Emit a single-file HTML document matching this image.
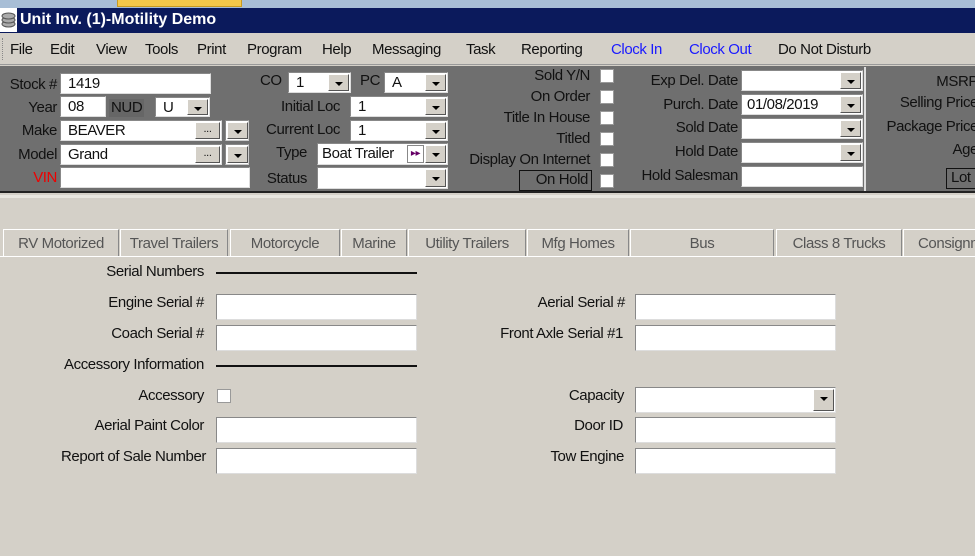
<!DOCTYPE html>
<html><head><meta charset="utf-8"><style>
*{margin:0;padding:0;box-sizing:border-box}
body{width:975px;height:556px;overflow:hidden;background:#d4d0c8;position:relative;font-family:"Liberation Sans",sans-serif;font-size:15px;color:#111;letter-spacing:-0.4px}
div,span{position:absolute}
.l{white-space:nowrap;text-align:right;line-height:18px}
.i{background:#fff;border:1px solid #888;border-right-color:#ddd;border-bottom-color:#ddd;padding-left:7px;line-height:19px;white-space:nowrap;overflow:hidden}
.b{background:#d4d0c8;border:1px solid #fff;border-right-color:#555;border-bottom-color:#555;top:1px;bottom:1px;width:21px}
.b:after{content:"";position:absolute;left:6px;top:7px;border-left:4px solid transparent;border-right:4px solid transparent;border-top:4px solid #000}
.d{background:#d4d0c8;border:1px solid #fff;border-right-color:#555;border-bottom-color:#555;top:1px;bottom:1px;width:25px;font-size:11px;text-align:center;line-height:12px}
.c{width:14px;height:14px;background:#fff;border:1px solid #999}
.tab{top:229px;height:28px;border:1px solid #fff;border-right-color:#888;border-bottom:none;text-align:center;color:#555;line-height:27px;white-space:nowrap;overflow:hidden}
.w{background:#fff;border:1px solid #888;border-right-color:#ccc;border-bottom-color:#ccc}
.m{top:41px;line-height:18px;white-space:nowrap}
</style></head><body>
<div style="left:0;top:0;width:975px;height:8px;background:#a8bed6"></div>
<div style="left:117px;top:0;width:125px;height:7px;background:#f4c84a;border:1px solid #c89a20;border-top:none"></div>
<div style="left:0;top:8px;width:975px;height:25px;background:#0b1a5c"></div>
<div style="left:0;top:8px;width:17px;height:24px;background:#fff"></div>
<svg style="position:absolute;left:1px;top:12px" width="15" height="16"><g fill="#aaa" stroke="#555"><ellipse cx="7.5" cy="12" rx="6.5" ry="3"/><ellipse cx="7.5" cy="8" rx="6.5" ry="3"/><ellipse cx="7.5" cy="4" rx="6.5" ry="3"/></g></svg>
<div style="left:20px;top:10px;color:#fff;font-weight:bold;font-size:16px;line-height:20px;letter-spacing:0">Unit Inv. (1)-Motility Demo</div>
<div style="left:0;top:33px;width:975px;height:32px;background:#d4d0c8;border-bottom:1px solid #999"></div>
<div style="left:2px;top:38px;width:2px;height:22px;border-left:1px dotted #888"></div>
<span class="m" style="left:10px">File</span><span class="m" style="left:50px">Edit</span><span class="m" style="left:96px">View</span><span class="m" style="left:145px">Tools</span><span class="m" style="left:197px">Print</span><span class="m" style="left:247px">Program</span><span class="m" style="left:322px">Help</span><span class="m" style="left:372px">Messaging</span><span class="m" style="left:466px">Task</span><span class="m" style="left:521px">Reporting</span><span class="m" style="left:611px;color:#1a1aff">Clock In</span><span class="m" style="left:689px;color:#1a1aff">Clock Out</span><span class="m" style="left:778px">Do Not Disturb</span>

<div style="left:0;top:66px;width:975px;height:127px;background:#6f6f6f;border-bottom:2px solid #222"></div>
<div style="left:0;top:195px;width:975px;height:3px;background:#e8e6e0"></div>

<div class="l" style="right:918px;top:76px">Stock #</div><div class="i" style="left:60px;top:73px;width:151px;height:21px">1419</div>
<div class="l" style="right:918px;top:99px">Year</div><div class="i" style="left:60px;top:96px;width:46px;height:21px">08</div>
<div class="l" style="left:109px;top:99px;background:#666;padding:0 2px">NUD</div>
<div class="i" style="left:155px;top:97px;width:55px;height:20px">U<div class="b" style="right:1px"></div></div>
<div class="l" style="right:918px;top:122px">Make</div><div class="i" style="left:60px;top:120px;width:162px;height:21px">BEAVER<div class="d" style="right:1px">...</div></div>
<div class="w" style="left:225px;top:120px;width:24px;height:21px"><div class="b" style="right:0"></div></div>
<div class="l" style="right:918px;top:146px">Model</div><div class="i" style="left:60px;top:144px;width:162px;height:21px">Grand<div class="d" style="right:1px">...</div></div>
<div class="w" style="left:225px;top:144px;width:24px;height:21px"><div class="b" style="right:0"></div></div>
<div class="l" style="right:918px;top:169px;color:#e00">VIN</div><div class="i" style="left:60px;top:167px;width:190px;height:21px"></div>

<div class="l" style="left:260px;top:72px">CO</div><div class="i" style="left:288px;top:72px;width:63px;height:21px">1<div class="b" style="right:1px"></div></div>
<div class="l" style="left:360px;top:72px">PC</div><div class="i" style="left:384px;top:72px;width:64px;height:21px">A<div class="b" style="right:1px"></div></div>
<div class="l" style="right:635px;top:98px">Initial Loc</div><div class="i" style="left:350px;top:96px;width:98px;height:21px">1<div class="b" style="right:1px"></div></div>
<div class="l" style="right:635px;top:121px">Current Loc</div><div class="i" style="left:350px;top:120px;width:98px;height:21px">1<div class="b" style="right:1px"></div></div>
<div class="l" style="right:668px;top:144px">Type</div><div class="i" style="left:317px;top:143px;width:131px;height:22px;padding-left:4px">Boat Trailer<div style="right:23px;top:1px;width:17px;height:18px;border:1px solid #888;background:#fff;color:#606;font-size:10px;line-height:16px;text-align:center">▸▸</div><div class="b" style="right:1px"></div></div>
<div class="l" style="right:668px;top:170px">Status</div><div class="i" style="left:317px;top:167px;width:131px;height:22px"><div class="b" style="right:1px"></div></div>

<div class="l" style="right:385px;top:67px">Sold Y/N</div><div class="c" style="left:600px;top:69px"></div>
<div class="l" style="right:385px;top:88px">On Order</div><div class="c" style="left:600px;top:90px"></div>
<div class="l" style="right:385px;top:109px">Title In House</div><div class="c" style="left:600px;top:111px"></div>
<div class="l" style="right:385px;top:130px">Titled</div><div class="c" style="left:600px;top:132px"></div>
<div class="l" style="right:385px;top:151px">Display On Internet</div><div class="c" style="left:600px;top:153px"></div>
<div class="l" style="left:519px;top:170px;width:73px;height:21px;border:1px solid #111;padding-right:3px">On Hold</div><div class="c" style="left:600px;top:174px"></div>

<div class="l" style="right:237px;top:72px">Exp Del. Date</div><div class="i" style="left:741px;top:70px;width:122px;height:21px"><div class="b" style="right:1px"></div></div>
<div class="l" style="right:237px;top:96px">Purch. Date</div><div class="i" style="left:741px;top:94px;width:122px;height:21px;padding-left:5px">01/08/2019<div class="b" style="right:1px"></div></div>
<div class="l" style="right:237px;top:119px">Sold Date</div><div class="i" style="left:741px;top:118px;width:122px;height:21px"><div class="b" style="right:1px"></div></div>
<div class="l" style="right:237px;top:143px">Hold Date</div><div class="i" style="left:741px;top:142px;width:122px;height:21px"><div class="b" style="right:1px"></div></div>
<div class="l" style="right:237px;top:167px">Hold Salesman</div><div class="i" style="left:741px;top:166px;width:122px;height:21px"></div>
<div style="left:864px;top:67px;width:2px;height:124px;background:#ddd"></div>

<div class="l" style="right:-3px;top:73px">MSRP</div>
<div class="l" style="right:-3px;top:94px">Selling Price</div>
<div class="l" style="right:-3px;top:118px">Package Price</div>
<div class="l" style="right:-3px;top:141px">Age</div>
<div class="l" style="left:946px;top:168px;width:40px;height:21px;border:1px solid #111;text-align:left;padding-left:4px">Lot</div>

<div class="tab" style="left:3px;width:116px">RV Motorized</div>
<div class="tab" style="left:120px;width:108px">Travel Trailers</div>
<div class="tab" style="left:230px;width:110px">Motorcycle</div>
<div class="tab" style="left:341px;width:66px">Marine</div>
<div class="tab" style="left:408px;width:118px">Utility Trailers</div>
<div class="tab" style="left:527px;width:102px">Mfg Homes</div>
<div class="tab" style="left:630px;width:144px">Bus</div>
<div class="tab" style="left:776px;width:126px">Class 8 Trucks</div>
<div class="tab" style="left:903px;width:80px;text-align:left;padding-left:14px">Consignment</div>
<div style="left:0;top:256px;width:975px;height:1px;background:#fff"></div>

<div class="l" style="right:771px;top:263px">Serial Numbers</div><div style="left:216px;top:272px;width:201px;height:2px;background:#111"></div>
<div class="l" style="right:771px;top:294px">Engine Serial #</div><div class="i" style="left:216px;top:294px;width:201px;height:26px"></div>
<div class="l" style="right:771px;top:325px">Coach Serial #</div><div class="i" style="left:216px;top:325px;width:201px;height:26px"></div>
<div class="l" style="right:771px;top:356px">Accessory Information</div><div style="left:216px;top:365px;width:201px;height:2px;background:#111"></div>
<div class="l" style="right:771px;top:387px">Accessory</div><div class="c" style="left:217px;top:389px"></div>
<div class="l" style="right:771px;top:417px">Aerial Paint Color</div><div class="i" style="left:216px;top:417px;width:201px;height:26px"></div>
<div class="l" style="right:769px;top:448px">Report of Sale Number</div><div class="i" style="left:216px;top:448px;width:201px;height:26px"></div>

<div class="l" style="right:350px;top:294px">Aerial Serial #</div><div class="i" style="left:635px;top:294px;width:201px;height:26px"></div>
<div class="l" style="right:352px;top:325px">Front Axle Serial #1</div><div class="i" style="left:635px;top:325px;width:201px;height:26px"></div>
<div class="l" style="right:351px;top:387px">Capacity</div><div class="i" style="left:635px;top:387px;width:201px;height:26px"><div class="b" style="right:1px;width:21px"></div></div>
<div class="l" style="right:352px;top:417px">Door ID</div><div class="i" style="left:635px;top:417px;width:201px;height:26px"></div>
<div class="l" style="right:351px;top:448px">Tow Engine</div><div class="i" style="left:635px;top:448px;width:201px;height:26px"></div>
</body></html>
